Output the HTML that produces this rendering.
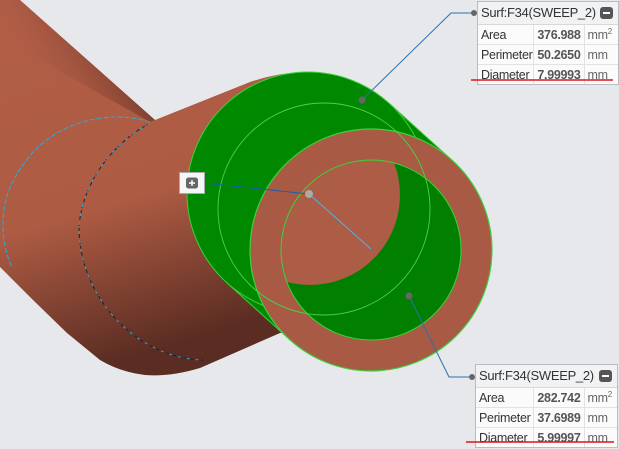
<!DOCTYPE html>
<html><head><style>
body{margin:0;width:619px;height:449px;overflow:hidden;background:#e7e8ec;font-family:"Liberation Sans",sans-serif;position:relative}
svg{position:absolute;left:0;top:0}
.box{position:absolute;background:#fbfbfb;border:1px solid #b9bcc0;font-size:12.5px;letter-spacing:-0.3px;color:#333}
.box .h{height:22px;line-height:22px;padding-left:3px;background:#f1f2f3;border-bottom:1px solid #d8d8d8;position:relative;color:#333;font-size:13px}
.box .h i{position:absolute;right:5px;top:5px;width:13px;height:12px;background:#555;border-radius:3px}
.box .h i:after{content:"";position:absolute;left:3px;top:5px;width:7px;height:2px;background:#fff}
.box table{border-collapse:collapse;width:100%;table-layout:fixed}
.box td{height:19px;border-bottom:1px solid #e2e2e2;padding:0 3px;white-space:nowrap;overflow:hidden}
.box td.v{border-left:1px solid #e2e2e2;border-right:1px solid #e2e2e2;font-weight:bold;color:#555;text-align:right}
.box td.u{color:#666}
sup{font-size:8px}
</style></head><body>
<svg width="619" height="449" viewBox="0 0 619 449">
<defs>
<linearGradient id="pg" x1="0" y1="0" x2="0.25" y2="1">
<stop offset="0" stop-color="#b25e47"/><stop offset="0.6" stop-color="#ad5b43"/><stop offset="1" stop-color="#5a2c22"/></linearGradient>
<linearGradient id="ug" x1="0" y1="0.3" x2="0.6" y2="0">
<stop offset="0" stop-color="#b25e47" stop-opacity="0"/><stop offset="1" stop-color="#6a3427" stop-opacity="0.9"/></linearGradient>
<linearGradient id="gg" x1="0" y1="0" x2="1" y2="1">
<stop offset="0" stop-color="#008a00"/><stop offset="0.6" stop-color="#008800"/><stop offset="1" stop-color="#005f00"/></linearGradient>
<clipPath id="hole"><circle cx="371" cy="250" r="90"/></clipPath>
</defs>
<!-- pipe body -->
<path d="M0,0 L20,0 L155,120 L250,82 Q280,72 308,72 L300,330 L280,333 L200,368 Q170,377 145,375 Q120,372 100,360 L67,333 L33,300 L0,267 Z" fill="url(#pg)"/>
<path d="M20,0 L155,120 L150,122 L40,60 L0,30 L0,0 Z" fill="url(#ug)"/>
<path d="M150,122 C120,112 70,115 35,150 C10,178 3,200 3,225 C3,245 8,258 12,268" fill="none" stroke="#2ea8e0" stroke-width="1" stroke-dasharray="5,2"/>
<path d="M150,123 C110,145 82,185 79,227 C79,300 140,360 205,360" fill="none" stroke="#222" stroke-width="1" stroke-dasharray="4,2"/>
<path d="M150,123 C110,145 82,185 79,227 C79,300 140,360 205,360" fill="none" stroke="#2ea8e0" stroke-width="1" stroke-dasharray="3,6"/>
<!-- green cylinder -->
<polygon points="389.2,103.3 452.2,160.3 289.8,339.7 226.8,282.7" fill="url(#gg)"/>
<line x1="389.2" y1="103.3" x2="452.2" y2="160.3" stroke="#3cd23c"/>
<line x1="226.8" y1="282.7" x2="289.8" y2="339.7" stroke="#3cd23c"/>
<circle cx="308" cy="193" r="121" fill="url(#gg)" stroke="#3cd23c" stroke-width="1"/>
<!-- front annulus -->
<circle cx="371" cy="250" r="121" fill="#a85a44" stroke="#3cd23c" stroke-width="1.2"/>
<g clip-path="url(#hole)">
<rect x="270" y="150" width="200" height="200" fill="#007f00"/>
<circle cx="310" cy="195" r="90" fill="#ad5c45"/>
</g>
<circle cx="371" cy="250" r="90" fill="none" stroke="#3cd23c" stroke-width="1"/>
<circle cx="324" cy="209" r="106" fill="none" stroke="#43d743" stroke-width="0.9"/>
<!-- leader lines -->
<polyline points="362,100 451,13 474,13" fill="none" stroke="#2d6fb0" stroke-width="1"/>
<polyline points="409,296 449,377 472,377" fill="none" stroke="#2d6fb0" stroke-width="1"/>
<line x1="204" y1="183" x2="309" y2="194" stroke="#1c5fa8" stroke-width="1"/>
<line x1="309" y1="194" x2="371" y2="249" stroke="#4fb3e6" stroke-width="1"/>
<circle cx="362" cy="100" r="3.5" fill="#666"/>
<circle cx="409" cy="296" r="3.5" fill="#666"/>
<circle cx="309" cy="194" r="4" fill="#aaa"/>
<circle cx="474" cy="13" r="3" fill="#666"/>
<circle cx="472" cy="377" r="3" fill="#666"/>
<!-- plus button -->
<rect x="179.5" y="172.5" width="25" height="21" fill="#f6f6f6" stroke="#aaa"/>
<rect x="186" y="177.5" width="12" height="11" rx="2.5" fill="#666"/>
<path d="M192,180v6M189,183h6" stroke="#fff" stroke-width="1.4"/>
</svg>
<div class="box" style="left:477px;top:1px;width:140px">
<div class="h">Surf:F34(SWEEP_2)<i></i></div>
<table><colgroup><col style="width:55px"><col style="width:51px"><col></colgroup>
<tr><td>Area</td><td class="v">376.988</td><td class="u">mm<sup>2</sup></td></tr>
<tr><td>Perimeter</td><td class="v">50.2650</td><td class="u">mm</td></tr>
<tr><td style="border:0">Diameter</td><td class="v" style="border-bottom:0">7.99993</td><td class="u" style="border:0">mm</td></tr></table>
</div>
<div class="box" style="left:475px;top:364px;width:141px">
<div class="h">Surf:F34(SWEEP_2)<i></i></div>
<table><colgroup><col style="width:57px"><col style="width:51px"><col></colgroup>
<tr><td>Area</td><td class="v">282.742</td><td class="u">mm<sup>2</sup></td></tr>
<tr><td>Perimeter</td><td class="v">37.6989</td><td class="u">mm</td></tr>
<tr><td style="border:0">Diameter</td><td class="v" style="border-bottom:0">5.99997</td><td class="u" style="border:0">mm</td></tr></table>
</div>
<svg width="619" height="449" style="pointer-events:none">
<line x1="471" y1="80" x2="613" y2="80" stroke="#e0141a" stroke-width="1.5"/>
<line x1="466" y1="442" x2="614" y2="442" stroke="#e0141a" stroke-width="1.5"/>
</svg>
</body></html>
